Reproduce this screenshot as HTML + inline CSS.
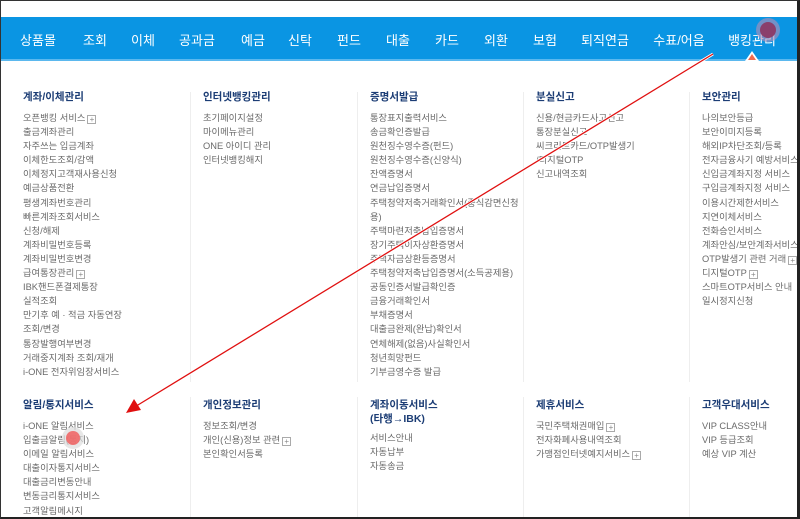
<!DOCTYPE html>
<html><head><meta charset="utf-8"><style>
*{margin:0;padding:0;box-sizing:border-box}
body{width:800px;height:519px;overflow:hidden;background:#fff;font-family:"Liberation Sans","Noto Sans CJK KR",sans-serif;position:relative}
.frame{position:absolute;left:0;top:0;width:800px;height:519px;border:1px solid #333;border-right:3px solid #222;border-bottom:2px solid #222;pointer-events:none;z-index:5}
.nav{position:absolute;left:0;top:17px;width:800px;height:44px;background:#0a95e3;border-bottom:2px solid #5bb8ee}
.nav span{position:absolute;top:13px;color:#fff;font-size:13px;transform:translateX(-50%);white-space:nowrap}
.col{position:absolute;font-size:9.3px;color:#6a6a6a;line-height:14.1px;white-space:nowrap}
.col h3{font-size:10.5px;color:#1c3d75;font-weight:bold;line-height:14px;margin-bottom:7px}
.p{display:inline-block;width:9px;height:9px;border:1px solid #aaa;font-size:8px;line-height:7px;text-align:center;vertical-align:-1px;color:#888;margin-left:2px}
.sep{position:absolute;width:1px;background:#eee}
</style></head><body>
<div class="nav">
<span style="left:38px">상품몰</span><span style="left:95px">조회</span><span style="left:143px">이체</span><span style="left:197px">공과금</span><span style="left:253px">예금</span><span style="left:300px">신탁</span><span style="left:349px">펀드</span><span style="left:398px">대출</span><span style="left:447px">카드</span><span style="left:496px">외환</span><span style="left:545px">보험</span><span style="left:605px">퇴직연금</span><span style="left:679px">수표/어음</span><span style="left:752px">뱅킹관리</span>
</div>
<div class="sep" style="left:190px;top:92px;height:290px"></div>
<div class="sep" style="left:357px;top:92px;height:290px"></div>
<div class="sep" style="left:523px;top:92px;height:290px"></div>
<div class="sep" style="left:689px;top:92px;height:290px"></div>
<div class="sep" style="left:190px;top:397px;height:122px"></div>
<div class="sep" style="left:357px;top:397px;height:122px"></div>
<div class="sep" style="left:523px;top:397px;height:122px"></div>
<div class="sep" style="left:689px;top:397px;height:122px"></div>

<div class="col" style="left:23px;top:90px"><h3>계좌/이체관리</h3>
<div>오픈뱅킹 서비스<span class="p">+</span></div><div>출금계좌관리</div><div>자주쓰는 입금계좌</div><div>이체한도조회/감액</div><div>이체정지고객재사용신청</div><div>예금상품전환</div><div>평생계좌번호관리</div><div>빠른계좌조회서비스<br>신청/해제</div><div>계좌비밀번호등록</div><div>계좌비밀번호변경</div><div>급여통장관리<span class="p">+</span></div><div>IBK핸드폰결제통장<br>실적조회</div><div>만기후 예 · 적금 자동연장<br>조회/변경</div><div>통장발행여부변경</div><div>거래중지계좌 조회/재개</div><div>i-ONE 전자위임장서비스</div></div>

<div class="col" style="left:203px;top:90px"><h3>인터넷뱅킹관리</h3>
<div>초기페이지설정</div><div>마이메뉴관리</div><div>ONE 아이디 관리</div><div>인터넷뱅킹해지</div></div>

<div class="col" style="left:370px;top:90px"><h3>증명서발급</h3>
<div>통장표지출력서비스</div><div>송금확인증발급</div><div>원천징수영수증(펀드)</div><div>원천징수영수증(신양식)</div><div>잔액증명서</div><div>연금납입증명서</div><div>주택청약저축거래확인서(중식감면신청<br>용)</div><div>주택마련저축납입증명서</div><div>장기주택이자상환증명서</div><div>주택자금상환등증명서</div><div>주택청약저축납입증명서(소득공제용)</div><div>공동인증서발급확인증</div><div>금융거래확인서</div><div>부채증명서</div><div>대출금완제(완납)확인서</div><div>연체해제(없음)사실확인서</div><div>청년희망펀드<br>기부금영수증 발급</div></div>

<div class="col" style="left:536px;top:90px"><h3>분실신고</h3>
<div>신용/현금카드사고신고</div><div>통장분실신고</div><div>씨크리트카드/OTP발생기<br>/디지털OTP</div><div>신고내역조회</div></div>

<div class="col" style="left:702px;top:90px"><h3>보안관리</h3>
<div>나의보안등급</div><div>보안이미지등록</div><div>해외IP차단조회/등록</div><div>전자금융사기 예방서비스<span class="p">+</span></div><div>신입금계좌지정 서비스</div><div>구입금계좌지정 서비스</div><div>이용시간제한서비스</div><div>지연이체서비스</div><div>전화승인서비스</div><div>계좌안심/보안계좌서비스 +</div><div>OTP발생기 관련 거래<span class="p">+</span></div><div>디지털OTP<span class="p">+</span></div><div>스마트OTP서비스 안내</div><div>일시정지신청</div></div>

<div class="col" style="left:23px;top:398px"><h3>알림/통지서비스</h3>
<div>i-ONE 알림서비스</div><div>입출금알림(통지)</div><div>이메일 알림서비스</div><div>대출이자통지서비스</div><div>대출금리변동안내</div><div>변동금리통지서비스</div><div>고객알림메시지</div></div>

<div class="col" style="left:203px;top:398px"><h3>개인정보관리</h3>
<div>정보조회/변경</div><div>개인(신용)정보 관련<span class="p">+</span></div><div>본인확인서등록</div></div>

<div class="col" style="left:370px;top:398px"><h3 style="margin-bottom:5px">계좌이동서비스<br>(타행→IBK)</h3>
<div>서비스안내</div><div>자동납부</div><div>자동송금</div></div>

<div class="col" style="left:536px;top:398px"><h3>제휴서비스</h3>
<div>국민주택채권매입<span class="p">+</span></div><div>전자화폐사용내역조회</div><div>가맹점인터넷예지서비스<span class="p">+</span></div></div>

<div class="col" style="left:702px;top:398px"><h3>고객우대서비스</h3>
<div>VIP CLASS안내</div><div>VIP 등급조회</div><div>예상 VIP 계산</div></div>

<svg style="position:absolute;left:0;top:0" width="800" height="519">
<polygon points="752,51 745,61 759,61" fill="#fff"/>
<polygon points="752,54 748,60 756,60" fill="#f26b4f"/>
<circle cx="768" cy="30" r="12" fill="#b98fb4" opacity=".6"/>
<circle cx="768" cy="30" r="8" fill="#8a3f6c"/>
<circle cx="73" cy="438" r="11" fill="#ddd" opacity=".7"/>
<circle cx="73" cy="438" r="7" fill="#f06060" opacity=".85"/>
<line x1="713" y1="54" x2="133" y2="408" stroke="#fff" stroke-width="3"/>
<line x1="713" y1="54" x2="133" y2="408" stroke="#e01010" stroke-width="1.3"/>
<polygon points="126,413 134,399 141,410" fill="#e01010"/>
</svg>
<div class="frame"></div>
</body></html>
